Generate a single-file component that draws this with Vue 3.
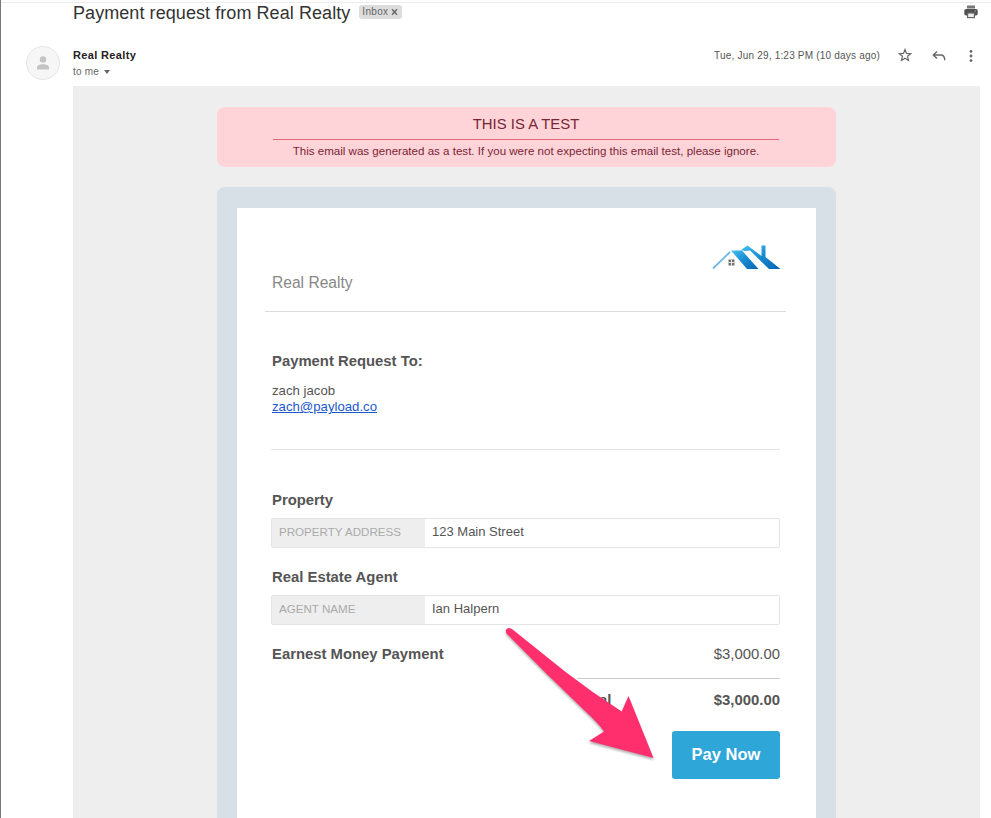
<template>
    <div class="mail">
        <header class="subject-bar">
            <h1 class="subject">Payment request from Real Realty</h1>
            <span class="inbox-tag"><span class="inbox-text">Inbox</span>
                <svg width="7" height="8" viewBox="0 0 7 8"><path d="M1 1.2 6 6.8M6 1.2 1 6.8" stroke="#666" stroke-width="1.4" /></svg>
            </span>
            <svg class="print" width="14" height="14" viewBox="0 0 14 14">
                <rect x="3" y="0.5" width="8" height="3" fill="#777" />
                <rect x="0.3" y="4" width="13.4" height="6.5" rx="1.8" fill="#505050" />
                <rect x="3.6" y="8" width="6.8" height="4.6" fill="#eee" stroke="#666" stroke-width="1.2" />
                <circle cx="11.3" cy="6" r="0.6" fill="#ddd" />
            </svg>
        </header>

        <section class="sender">
            <div class="avatar">
                <svg width="14" height="16" viewBox="0 0 14 16" fill="#c4c4c4">
                    <circle cx="7" cy="4.5" r="3.2" />
                    <path d="M1 14.5v-2C1 10.5 4 9.3 7 9.3s6 1.2 6 3.2v2z" />
                </svg>
            </div>
            <div class="sender-info">
                <div class="sender-name"><span>Real Realty</span></div>
                <div class="recipient"><span>to me</span><i class="caret"></i></div>
            </div>
            <div class="meta">
                <span class="date">Tue, Jun 29, 1:23 PM (10 days ago)</span>
                <svg class="star" width="14" height="14" viewBox="0 0 14 14" fill="none" stroke="#666" stroke-width="1.2">
                    <path d="M7 1.5 8.5 5.4l4.2.3-3.2 2.6 1 4.1L7 10.2l-3.5 2.2 1-4.1L1.3 5.7l4.2-.3z" />
                </svg>
                <svg class="reply" width="14" height="12" viewBox="0 0 14 12" fill="none" stroke="#666" stroke-width="1.4">
                    <path d="M5 1.5 1.3 5 5 8.5M1.5 5H9C11.5 5 12.6 6.5 12.8 10.2" />
                </svg>
                <svg class="more" width="4" height="14" viewBox="0 0 4 14" fill="#666">
                    <circle cx="2" cy="2.4" r="1.4" /><circle cx="2" cy="7" r="1.4" /><circle cx="2" cy="11.6" r="1.4" />
                </svg>
            </div>
        </section>

        <main class="mail-body">
            <div class="test-banner">
                <div class="test-title"><span>THIS IS A TEST</span></div>
                <div class="test-note"><span>This email was generated as a test. If you were not expecting this email test, please ignore.</span></div>
            </div>

            <div class="frame">
                <div class="card">
                    <div class="card-head">
                        <span class="company">Real Realty</span>
                        <svg class="logo" width="70" height="28" viewBox="0 0 70 28">
                            <defs>
                                <linearGradient id="roof" x1="0" y1="0" x2="1" y2="1">
                                    <stop offset="0" stop-color="#45c0ef" />
                                    <stop offset="0.5" stop-color="#168bd0" />
                                    <stop offset="1" stop-color="#0864b4" />
                                </linearGradient>
                            </defs>
                            <path d="M2 25.5 19 9" stroke="#70b9df" stroke-width="1.8" />
                            <path d="M20 7.5 31 7.5 47.500 26H36z" fill="url(#roof)" />
                            <path d="M30 7 36.500 2.500 50.500 13V2.500h4V14L69.500 26H58L39 7.500 34 8z" fill="url(#roof)" />
                            <path d="M17.500 16.500h6v6h-6z" fill="#75716e" />
                            <path d="M20.500 16.500v6M17.500 19.500h6" stroke="#fff" stroke-width=".8" />
                        </svg>
                    </div>

                    <div class="payee">
                        <h2><span>Payment Request To:</span></h2>
                        <div class="payee-name"><span>zach jacob</span></div>
                        <a class="payee-mail">zach@payload.co</a>
                    </div>

                    <template v-for="group in groups" :key="group.title">
                        <h2 class="group-title"><span>{{ group.title }}</span></h2>
                        <div class="field">
                            <div class="field-label"><span>{{ group.label }}</span></div>
                            <div class="field-value"><span>{{ group.value }}</span></div>
                        </div>
                    </template>

                    <div class="line-item">
                        <h2><span>Earnest Money Payment</span></h2>
                        <span class="amount">$3,000.00</span>
                    </div>
                    <div class="total">
                        <span>Total</span>
                        <span class="amount">$3,000.00</span>
                    </div>
                    <button class="pay"><span>Pay Now</span></button>
                </div>
            </div>
        </main>

        <svg class="arrow" width="156" height="140" viewBox="0 0 156 140">
            <path d="M6.3 8.2Q4.5 3.5 9.5 3L12 4 65 46.5Q92 67.500 121.7 86.500L128.5 71 153.5 133 89 116 104 106.5Q99 99 85 86Q45 48 6.3 8.2Z" fill="#ff2f6e" />
        </svg>
    </div>
</template>

<script setup>
const groups = [
    { title: 'Property', label: 'PROPERTY ADDRESS', value: '123 Main Street' },
    { title: 'Real Estate Agent', label: 'AGENT NAME', value: 'Ian Halpern' }
]
</script>

<style>
body {
    margin: 0;
    background: #fff;
}
</style>

<style scoped>
.mail {
    position: relative;
    box-sizing: border-box;
    height: 818px;
    overflow: hidden;
    border-left: 1px solid #77777e;
    font-family: "Liberation Sans", Arial, sans-serif;
    color: #555;
}

.mail svg {
    display: block;
    flex: none;
}

.subject-bar {
    display: flex;
    height: 22px;
    margin-top: 2px;
    padding: 0 13px 0 72px;
    border-top: 1px solid #ececec;
}

.subject {
    margin: 0;
    font-size: 18px;
    font-weight: 400;
    line-height: 20px;
    letter-spacing: 0.07px;
    white-space: nowrap;
    color: #333;
}

.inbox-tag {
    display: flex;
    box-sizing: border-box;
    align-items: center;
    justify-content: space-between;
    width: 43px;
    height: 14px;
    margin: 2px 0 0 9px;
    padding: 0 4px 0 3px;
    border-radius: 3px;
    background: #ddd;
    font-size: 10px;
    line-height: 12px;
    letter-spacing: 0.3px;
    color: #666;
}

.inbox-text {
    margin-top: -1px;
}

.print {
    margin: 2px 0 0 auto;
}

.sender {
    display: flex;
    height: 61px;
    padding: 0 18px 0 25px;
}

.avatar {
    display: flex;
    box-sizing: border-box;
    align-items: center;
    justify-content: center;
    width: 34px;
    height: 34px;
    margin-top: 21px;
    border: 1px solid #e6e6e6;
    border-radius: 50%;
    background: #f6f6f6;
}

.sender-info {
    margin: 23px 0 0 13px;
}

.sender-name {
    font-size: 11px;
    font-weight: 700;
    line-height: 15px;
    letter-spacing: 0.35px;
    color: #222;
}

.recipient {
    display: flex;
    align-items: center;
    margin-top: 1px;
    font-size: 10px;
    line-height: 15px;
    letter-spacing: 0.2px;
    color: #666;
}

.caret {
    margin-left: 5px;
    border: 3.5px solid transparent;
    border-top: 4px solid #666;
    border-bottom: 0;
}

.meta {
    display: flex;
    align-items: center;
    height: 14px;
    margin: 24px 0 0 auto;
}

.date {
    margin-top: -2px;
    font-size: 10px;
    letter-spacing: 0.2px;
    white-space: nowrap;
}

.star {
    margin: -2px 0 0 18px;
}

.reply {
    margin-left: 20px;
}

.more {
    margin: -1px 0 0 23px;
}

.mail-body {
    box-sizing: border-box;
    width: 907px;
    height: 732px;
    margin-left: 72px;
    padding: 21px 0 0 144px;
    background: #eee;
}

.test-banner {
    box-sizing: border-box;
    width: 619px;
    height: 60px;
    padding: 0 57px 0 56px;
    border-radius: 8px;
    background: #fed4d9;
    text-align: center;
    color: #7b2434;
}

.test-title {
    height: 32px;
    border-bottom: 1px solid #e8657c;
    font-size: 14.9px;
    line-height: 34px;
}

.test-note {
    font-size: 11.57px;
    line-height: 23px;
    white-space: nowrap;
}

.frame {
    box-sizing: border-box;
    width: 619px;
    height: 631px;
    margin-top: 20px;
    padding: 21px 20px 0;
    border-radius: 8px 8px 0 0;
    background: #d7e0e7;
}

.card {
    box-sizing: border-box;
    height: 610px;
    padding: 0 36px 0 34px;
    background: #fff;
}

.card-head {
    display: flex;
    justify-content: space-between;
    height: 103px;
    margin: 0 -6px;
    padding: 0 5px 0 6px;
    border-bottom: 1px solid #ddd;
}

.company {
    margin: 65px 0 0 1px;
    font-size: 15.6px;
    line-height: 20px;
    color: #888;
}

.logo {
    margin-top: 35px;
}

h2 {
    margin: 0;
    padding-left: 1px;
    font-size: 14.85px;
    font-weight: 700;
    line-height: 20px;
    color: #555;
}

.payee {
    height: 98px;
    padding-top: 39px;
    margin-bottom: 40px;
    border-bottom: 1px solid #e4e4e4;
    font-size: 13.2px;
    line-height: 16px;
}

.payee-name {
    margin-top: 12px;
    padding-left: 1px;
}

.payee-mail {
    margin-left: 1px;
    text-decoration: underline;
    color: #1b58cc;
}

.field {
    display: flex;
    box-sizing: border-box;
    height: 30px;
    margin: 8px 0 19px;
    border: 1px solid #e5e5e5;
    border-radius: 2px;
    font-size: 13px;
    line-height: 26px;
}

.field-label {
    box-sizing: border-box;
    width: 153px;
    padding-left: 7px;
    background: #eee;
    font-size: 11.6px;
    color: #aaa;
}

.field-value {
    padding-left: 7px;
}

.line-item {
    display: flex;
    justify-content: space-between;
    height: 34px;
}

.amount {
    font-size: 14.9px;
    line-height: 20px;
}

.total {
    display: flex;
    justify-content: space-between;
    height: 52px;
    margin-left: 306px;
    border-top: 1px solid #ccc;
    font-size: 14.9px;
    font-weight: 700;
    line-height: 43px;
}

.total .amount {
    line-height: 43px;
}

.pay {
    display: block;
    width: 108px;
    height: 48px;
    margin-left: auto;
    padding: 0 0 1px;
    border: 0;
    border-radius: 3px;
    background: #2ea6d8;
    font-family: inherit;
    font-size: 16.5px;
    font-weight: 700;
    color: #fff;
}

/* pointer laid over the email */
.arrow {
    position: absolute;
    top: 625px;
    left: 499px;
    filter: drop-shadow(0 2px 1px rgba(0, 0, 0, 0.3));
}
</style>
